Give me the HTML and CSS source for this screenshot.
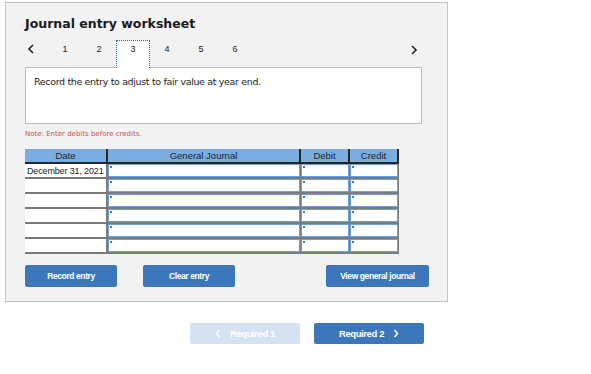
FILE: index.html
```html
<!DOCTYPE html>
<html lang="en">
<head>
  <meta charset="UTF-8" />
  <title>Journal entry worksheet</title>
  <link rel="stylesheet" href="styles.css">
</head>
<body>
  <div class="worksheet">
    <h1 class="ws-title">Journal entry worksheet</h1>

    <div class="tabs">
      <span class="tab-arrow">
        <svg width="8" height="10" viewBox="0 0 8 10"><path d="M6 1 L2 5 L6 9" fill="none" stroke="#222" stroke-width="1.6"/></svg>
      </span>
      <span class="tab">1</span>
      <span class="tab">2</span>
      <span class="tab active">3</span>
      <span class="tab">4</span>
      <span class="tab">5</span>
      <span class="tab">6</span>
      <span class="tab-arrow right">
        <svg width="8" height="10" viewBox="0 0 8 10"><path d="M2 1 L6 5 L2 9" fill="none" stroke="#222" stroke-width="1.6"/></svg>
      </span>
    </div>

    <div class="prompt">Record the entry to adjust to fair value at year end.</div>

    <p class="note">Note: Enter debits before credits.</p>

    <table class="journal">
      <colgroup>
        <col class="c-date">
        <col class="c-gj">
        <col class="c-num">
        <col class="c-num">
      </colgroup>
      <thead>
        <tr>
          <th>Date</th>
          <th>General Journal</th>
          <th>Debit</th>
          <th>Credit</th>
        </tr>
      </thead>
      <tbody>
        <tr>
          <td class="date">December 31, 2021</td>
          <td class="cell"><div class="field"></div></td>
          <td class="cell"><div class="field"></div></td>
          <td class="cell"><div class="field"></div></td>
        </tr>
        <tr>
          <td class="date"></td>
          <td class="cell"><div class="field"></div></td>
          <td class="cell"><div class="field"></div></td>
          <td class="cell"><div class="field"></div></td>
        </tr>
        <tr>
          <td class="date"></td>
          <td class="cell"><div class="field"></div></td>
          <td class="cell"><div class="field"></div></td>
          <td class="cell"><div class="field"></div></td>
        </tr>
        <tr>
          <td class="date"></td>
          <td class="cell"><div class="field"></div></td>
          <td class="cell"><div class="field"></div></td>
          <td class="cell"><div class="field"></div></td>
        </tr>
        <tr>
          <td class="date"></td>
          <td class="cell"><div class="field"></div></td>
          <td class="cell"><div class="field"></div></td>
          <td class="cell"><div class="field"></div></td>
        </tr>
        <tr>
          <td class="date"></td>
          <td class="cell"><div class="field"></div></td>
          <td class="cell"><div class="field"></div></td>
          <td class="cell"><div class="field"></div></td>
        </tr>
      </tbody>
    </table>

    <div class="actions">
      <button class="btn">Record entry</button>
      <button class="btn">Clear entry</button>
      <button class="btn wide">View general journal</button>
    </div>
  </div>

  <div class="pager">
    <button class="btn pager-btn disabled">
      <svg width="6" height="9" viewBox="0 0 6 9"><path d="M4.5 1 L1.5 4.5 L4.5 8" fill="none" stroke="#fff" stroke-width="1.5"/></svg>
      Required 1
    </button>
    <button class="btn pager-btn">
      Required 2
      <svg width="6" height="9" viewBox="0 0 6 9"><path d="M1.5 1 L4.5 4.5 L1.5 8" fill="none" stroke="#fff" stroke-width="1.5"/></svg>
    </button>
  </div>
</body>
</html>
```

FILE: styles.css
```css
:root {
  --btn-blue: #3b77ba;
  --head-blue: #7aaee3;
  --grid-gray: #7b7b7b;
  --field-blue: #6e9fd9;
}

body {
  margin: 0;
  background: #ffffff;
  font-family: 'Liberation Sans', Arial, sans-serif;
  color: #222;
}

.worksheet {
  box-sizing: border-box;
  width: 443px;
  height: 300px;
  margin: 2px 0 0 5px;
  padding: 0 19px 0 19px;
  background: #f2f2f2;
  border: 1px solid #c4c4c4;
}

.ws-title {
  box-sizing: border-box;
  height: 37px;
  margin: 0;
  padding-top: 13px;
  font-family: 'DejaVu Sans', Verdana, sans-serif;
  font-size: 12.5px;
  line-height: 15px;
  font-weight: bold;
  color: #1a1a1a;
}

.tabs {
  display: flex;
  align-items: stretch;
  height: 27px;
  width: 397px;
}

.tab-arrow {
  width: 23px;
  display: flex;
  align-items: flex-start;
  padding: 4px 0 0 2px;
  box-sizing: border-box;
}

.tab-arrow.right {
  margin-left: auto;
  width: 12px;
  padding: 5px 0 0;
}

.tab {
  width: 34px;
  display: flex;
  align-items: flex-start;
  justify-content: center;
  padding-top: 4px;
  box-sizing: border-box;
  font-size: 9px;
  color: #222;
}

.tab.active {
  background: #fff;
  border: 1px dotted #2d62b4;
  border-bottom: none;
  padding-top: 3px;
  position: relative;
  z-index: 1;
  height: 28px;
}

.prompt {
  box-sizing: border-box;
  width: 397px;
  height: 57px;
  background: #fff;
  border: 1px solid #bcbcbc;
  padding: 8px 8px;
  font-family: 'DejaVu Sans', Verdana, sans-serif;
  font-size: 9.5px;
  letter-spacing: -0.35px;
  color: #222;
}

.note {
  margin: 6px 0 0;
  height: 19px;
  font-family: 'DejaVu Sans', Verdana, sans-serif;
  font-size: 7px;
  color: #d0504a;
}

.journal {
  border-collapse: collapse;
  table-layout: fixed;
  width: 373px;
}

.c-date { width: 82px; }
.c-gj { width: 193px; }
.c-num { width: 49px; }

.journal th {
  height: 13px;
  padding: 0;
  background: var(--head-blue);
  font-weight: normal;
  font-size: 9.5px;
  color: #1f1f1f;
  border-left: 2px solid #262626;
  border-bottom: 2px solid #262626;
}

.journal th:first-child {
  border-left: none;
}

.journal th:last-child {
  border-right: 2px solid #262626;
}

.journal td {
  padding: 0;
  height: 13px;
}

.journal .date {
  background: #fff;
  font-size: 9px;
  letter-spacing: -0.15px;
  padding-left: 2px;
  white-space: nowrap;
  overflow: hidden;
  border-bottom: 2px solid var(--grid-gray);
  border-right: 2px solid var(--grid-gray);
}

.journal .cell {
  border: 1px solid var(--grid-gray);
  border-top: none;
  border-bottom-width: 2px;
}

.field {
  position: relative;
  height: 11px;
  background: #fff;
  border: 1px solid var(--field-blue);
}

.field::before {
  content: '';
  position: absolute;
  left: 1px;
  top: 1px;
  width: 2px;
  height: 2px;
  background: #3a78d0;
}

.actions {
  display: flex;
  gap: 26px;
  margin-top: 11px;
  width: 404px;
}

.btn {
  width: 92px;
  height: 22px;
  border: none;
  border-radius: 2px;
  background: var(--btn-blue);
  color: #fff;
  font-family: 'Liberation Sans', Arial, sans-serif;
  font-weight: bold;
  font-size: 8.5px;
  letter-spacing: -0.4px;
  padding: 0;
  cursor: pointer;
}

.btn.wide {
  width: 103px;
  margin-left: auto;
}

.pager {
  display: flex;
  gap: 14px;
  margin: 21px 0 0 190px;
}

.pager-btn {
  width: 110px;
  height: 21px;
  font-size: 9.5px;
  display: flex;
  align-items: center;
  justify-content: center;
  gap: 9px;
}

.pager-btn.disabled {
  background: #d5e2f1;
}
```
